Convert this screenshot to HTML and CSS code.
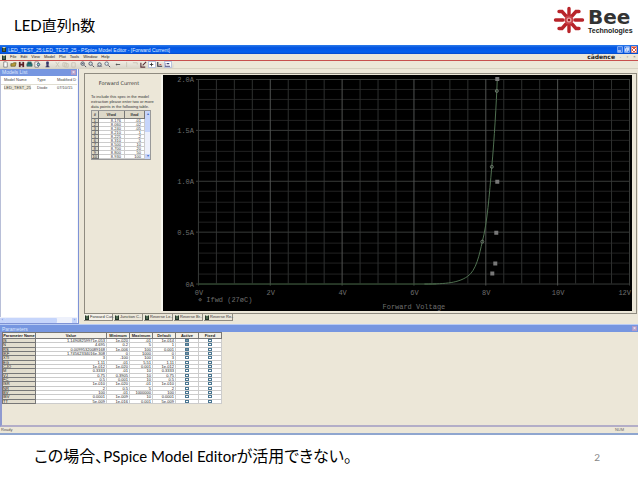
FILE: index.html
```html
<!DOCTYPE html>
<html lang="ja">
<head>
<meta charset="utf-8">
<title>LED直列n数</title>
<link rel="stylesheet" href="styles.css">
</head>
<body>
<header class="slide-head">
  <h1>LED直列n数</h1>
  <div class="logo">
    <svg class="logo-mark" viewBox="0 0 32 28" aria-hidden="true">
      <g stroke="#b8242a" stroke-width="3.4" stroke-linecap="round" fill="none">
        <path d="M16 2.500V9M16 19v6.500M2.500 14H10M22 14h7.500M6 5.500h3L13 10M26 5.500h-3L19 10M6 22.500h3L13 18M26 22.500h-3L19 18"/>
      </g>
      <circle cx="16" cy="14" r="4.500" fill="#c9434a"/>
      <circle cx="16" cy="14" r="2.500" fill="#e9a3a3"/>
      <circle cx="16" cy="14" r="1.200" fill="#a01a20"/>
    </svg>
    <div class="logo-words"><b>Bee</b><span>Technologies</span></div>
  </div>
</header>

<main class="window">
  <div class="titlebar">
    <i class="app-icon"></i>
    <span class="window-title">LED_TEST_25:LED_TEST_25 - PSpice Model Editor - [Forward Current]</span>
    <button class="win-btn" aria-label="Minimize"><svg viewBox="0 0 6 7"><path d="M1 5h3"/></svg></button>
    <button class="win-btn" aria-label="Restore"><svg viewBox="0 0 6 7"><path d="M1 3h3v2H1zM2 2h3v2"/></svg></button>
    <button class="win-btn close" aria-label="Close"><svg viewBox="0 0 6 7"><path d="M1 2l4 4M5 2L1 6"/></svg></button>
  </div>
  <nav class="menubar">
    <i class="doc-icon"></i>
    <button>File</button><button>Edit</button><button>View</button><button>Model</button><button>Plot</button><button>Tools</button><button>Window</button><button>Help</button>
    <span class="brand">cādence</span>
    <button class="mini" aria-label="Minimize document">-</button><button class="mini" aria-label="Restore document">▫</button><button class="mini" aria-label="Close document">×</button>
  </nav>
  <div class="toolbar">
    <div class="tools">
      <button aria-label="New"><svg viewBox="0 0 8 8"><path d="M2 1h3l1 1v5H2z" fill="#fff" stroke="#555" stroke-width=".7"/></svg></button>
      <button aria-label="Open"><svg viewBox="0 0 8 8"><path d="M1 6V3h2l1-1h3L6 6z" fill="#b59b38" stroke="#554b20" stroke-width=".7"/></svg></button>
      <button aria-label="Save"><svg viewBox="0 0 8 8"><path d="M1 1h6v6H1z" fill="#5a2024"/><path d="M3 1h2v2H3zM3 5h2v2H3z" fill="#ddd"/></svg></button>
      <button aria-label="Print"><svg viewBox="0 0 8 8"><path d="M2 1h4v2H2zM1 3h6v3H1z" fill="#287a7c" stroke="#24494b" stroke-width=".6"/></svg></button>
      <button aria-label="Preview"><svg viewBox="0 0 8 8"><path d="M1 1h4v6H1z" fill="#fff" stroke="#555" stroke-width=".7"/><circle cx="5" cy="4" r="1.500" fill="#9db" stroke="#347"/></svg></button>
      <span class="gap"></span>
      <button aria-label="Extract"><svg viewBox="0 0 8 8"><path d="M2 7l2-3 2 3M3 1h2v3H3z" fill="#335" stroke="#447"/></svg></button>
      <span class="gap"></span>
      <button aria-label="Cut" disabled><svg viewBox="0 0 8 8"><path d="M2 1l4 6M6 1L2 7" stroke="#c8c3b5" fill="none"/></svg></button>
      <button aria-label="Copy" disabled><svg viewBox="0 0 8 8"><path d="M1 2h4v4H1zM3 3h4v4H3z" stroke="#c8c3b5" fill="none"/></svg></button>
      <button aria-label="Paste" disabled><svg viewBox="0 0 8 8"><path d="M2 2h4v5H2z" stroke="#c8c3b5" fill="none"/></svg></button>
      <span class="gap"></span>
      <button aria-label="Zoom in"><svg viewBox="0 0 8 8"><circle cx="3" cy="3" r="2" fill="#cdd" stroke="#556"/><path d="M5 5l2 2M2 3h2" stroke="#445"/></svg></button>
      <button aria-label="Zoom out"><svg viewBox="0 0 8 8"><circle cx="3" cy="3" r="2" fill="#cdd" stroke="#556"/><path d="M5 5l2 2" stroke="#445"/></svg></button>
      <button aria-label="Zoom area"><svg viewBox="0 0 8 8"><circle cx="4" cy="4" r="2" fill="#cdd" stroke="#556"/><path d="M1 6h6" stroke="#778"/></svg></button>
      <button aria-label="Zoom fit"><svg viewBox="0 0 8 8"><circle cx="3" cy="3" r="2" fill="#dee" stroke="#667"/><path d="M5 5l2 2" stroke="#445"/></svg></button>
      <span class="gap"></span>
      <button aria-label="Trace"><svg viewBox="0 0 8 8"><path d="M2 4h5M3 3v2" stroke="#555" fill="none"/></svg></button>
      <span class="gap"></span>
      <button aria-label="Log X" disabled><svg viewBox="0 0 8 8"><path d="M3 1v6" stroke="#c8c3b5"/></svg></button>
      <button aria-label="Log Y" disabled><svg viewBox="0 0 8 8"><path d="M1 2h5v2" stroke="#c8c3b5" fill="none"/></svg></button>
      <button aria-label="Edit trace"><svg viewBox="0 0 8 8"><path d="M1 2v5h5M3 5l4-4" stroke="#5a3038" stroke-width="1.300" fill="none"/></svg></button>
      <button class="on" aria-label="Cursor"><svg viewBox="0 0 8 8"><path d="M4 2v4M2 4h4" stroke="#333" fill="none"/></svg></button>
      <button aria-label="Scale X"><svg viewBox="0 0 8 8"><path d="M2 1v5h5" stroke="#334" stroke-width="1.300" fill="none"/><path d="M4 4h2" stroke="#b44"/></svg></button>
      <button class="on" aria-label="Scale Y"><svg viewBox="0 0 8 8"><path d="M1 2v4h6M3 3h3" stroke="#447" stroke-width="1.200" fill="none"/></svg></button>
    </div>
  </div>

  <div class="workspace">
    <aside class="models">
      <h2>Models List<button aria-label="Close models list">×</button></h2>
      <div class="models-body">
        <table>
          <thead><tr><th>Model Name</th><th>Type</th><th>Modified D</th></tr></thead>
          <tbody><tr><td><mark>LED_TEST_25</mark></td><td>Diode</td><td>07/10/15</td></tr></tbody>
        </table>
      </div>
      <div class="hscroll"><button aria-label="Scroll left">‹</button><i></i><button aria-label="Scroll right">›</button></div>
    </aside>

    <section class="document">
      <div class="doc-frame">
        <div class="form">
          <h3>Forward Current</h3>
          <p>To include this spec in the model<br>extraction please enter two or more<br>data points in the following table.</p>
          <div class="points">
            <table>
              <thead><tr><th>#</th><th>Vfwd</th><th>Ifwd</th></tr></thead>
              <tbody>
                <tr><th>1</th><td>8.176</td><td>.01</td></tr>
                <tr><th>2</th><td>8.060</td><td>.02</td></tr>
                <tr><th>3</th><td>8.240</td><td>.05</td></tr>
                <tr><th>4</th><td>8.210</td><td>.1</td></tr>
                <tr><th>5</th><td>8.225</td><td>.2</td></tr>
                <tr><th>6</th><td>8.310</td><td>.5</td></tr>
                <tr><th>7</th><td>8.500</td><td>10</td></tr>
                <tr><th>8</th><td>8.700</td><td>20</td></tr>
                <tr><th>9</th><td>8.800</td><td>50</td></tr>
                <tr><th>10</th><td>8.930</td><td>100</td></tr>
              </tbody>
            </table>
            <div class="vscroll"><button aria-label="Scroll up">▴</button><i></i><button aria-label="Scroll down">▾</button></div>
          </div>
        </div>
        <svg class="plot" viewBox="0 0 470 237" role="img" aria-label="Forward Current against Forward Voltage">
          <g fill="none">
            <path class="minor" d="M35 14.500H468M35 24.500H468M35 34.500H468M35 45.500H468M35 65.500H468M35 76.500H468M35 86.500H468M35 96.500H468M35 116.500H468M35 127.500H468M35 137.500H468M35 147.500H468M35 168.500H468M35 178.500H468M35 188.500H468M35 199.500H468"/>
            <path class="minor-v" d="M53.500 4V209M71.500 4V209M89.500 4V209M125.500 4V209M143.500 4V209M161.500 4V209M197.500 4V209M215.500 4V209M233.500 4V209M269.500 4V209M287.500 4V209M305.500 4V209M341.500 4V209M359.500 4V209M377.500 4V209M413.500 4V209M431.500 4V209M449.500 4V209"/>
            <path class="major" d="M33 4.500H468M33 55.500H468M33 106.500H468M33 157.500H468M33 209.500H468M35.500 4V211M467.500 4V211"/>
            <path class="major-v" d="M107.500 4V211M179.500 4V211M251.500 4V211M323.500 4V211M395.500 4V211"/>
            <path class="base" d="M35 209.500H274"/>
            <path class="curve" d="M262 209.500C285 209.500 296 208 305 202S317 180 320 167C325 148 327 120 329.500 92S334 30 335 4"/>
            <g class="ring"><circle cx="320" cy="167" r="1.500"/><circle cx="329.500" cy="92" r="1.500"/><circle cx="334.500" cy="16" r="1.500"/></g>
          </g>
          <path class="dots" d="M333 2h4v4h-4zM333 105h4v4h-4zM332 156h4v4h-4zM331 187h4v4h-4zM328 197h4v4h-4z"/>
          <g class="ticks">
            <g text-anchor="end"><text x="31" y="7">2.0A</text><text x="31" y="58">1.5A</text><text x="31" y="109">1.0A</text><text x="31" y="160">0.5A</text><text x="31" y="212">0A</text><text x="469" y="220">12V</text></g>
            <g text-anchor="middle"><text x="36" y="220">0V</text><text x="108" y="220">2V</text><text x="180" y="220">4V</text><text x="252" y="220">6V</text><text x="324" y="220">8V</text><text x="396" y="220">10V</text></g>
            <text x="35" y="228">⋄ Ifwd (27øC)</text>
            <text x="220" y="235">Forward Voltage</text>
          </g>
        </svg>
      </div>
      <div class="tabs">
        <button class="active"><i class="doc-icon"></i>Forward Cur..</button><button><i class="doc-icon"></i>Junction C..</button><button><i class="doc-icon"></i>Reverse Le..</button><button><i class="doc-icon"></i>Reverse Br..</button><button><i class="doc-icon"></i>Reverse Re..</button>
      </div>
    </section>
  </div>

  <section class="parameters">
    <h2>Parameters<button aria-label="Close parameters">×</button></h2>
    <div class="param-body">
      <table>
        <colgroup><col class="c-name"><col class="c-value"><col class="c-num"><col class="c-num"><col class="c-num"><col class="c-num"><col class="c-num"></colgroup>
        <thead><tr><th>Parameter Name</th><th>Value</th><th>Minimum</th><th>Maximum</th><th>Default</th><th>Active</th><th>Fixed</th></tr></thead>
        <tbody>
          <tr><th>IS</th><td>1.14908259971e-053</td><td>1e-020</td><td>.01</td><td>1e-014</td><td><input type="checkbox" aria-label="IS active" checked></td><td><input type="checkbox" aria-label="IS fixed"></td></tr>
          <tr><th>N</th><td>4.695</td><td>0.2</td><td>5</td><td>1</td><td><input type="checkbox" aria-label="N active" checked></td><td><input type="checkbox" aria-label="N fixed"></td></tr>
          <tr><th>RS</th><td>0.00995320089168</td><td>1e-006</td><td>100</td><td>0.001</td><td><input type="checkbox" aria-label="RS active" checked></td><td><input type="checkbox" aria-label="RS fixed"></td></tr>
          <tr><th>IKF</th><td>1.74562334016e-308</td><td>0</td><td>1000</td><td>0</td><td><input type="checkbox" aria-label="IKF active" checked></td><td><input type="checkbox" aria-label="IKF fixed"></td></tr>
          <tr><th>XTI</th><td>3</td><td>-100</td><td>100</td><td>3</td><td><input type="checkbox" aria-label="XTI active"></td><td><input type="checkbox" aria-label="XTI fixed"></td></tr>
          <tr><th>EG</th><td>1.11</td><td>.01</td><td>5.51</td><td>1.11</td><td><input type="checkbox" aria-label="EG active"></td><td><input type="checkbox" aria-label="EG fixed"></td></tr>
          <tr><th>CJO</th><td>1e-012</td><td>1e-020</td><td>0.001</td><td>1e-012</td><td><input type="checkbox" aria-label="CJO active"></td><td><input type="checkbox" aria-label="CJO fixed"></td></tr>
          <tr><th>M</th><td>0.3333</td><td>.01</td><td>10</td><td>0.3333</td><td><input type="checkbox" aria-label="M active"></td><td><input type="checkbox" aria-label="M fixed"></td></tr>
          <tr><th>VJ</th><td>0.75</td><td>0.3905</td><td>10</td><td>0.75</td><td><input type="checkbox" aria-label="VJ active"></td><td><input type="checkbox" aria-label="VJ fixed"></td></tr>
          <tr><th>FC</th><td>0.5</td><td>0.001</td><td>10</td><td>0.5</td><td><input type="checkbox" aria-label="FC active"></td><td><input type="checkbox" aria-label="FC fixed"></td></tr>
          <tr><th>ISR</th><td>1e-010</td><td>1e-020</td><td>.01</td><td>1e-010</td><td><input type="checkbox" aria-label="ISR active"></td><td><input type="checkbox" aria-label="ISR fixed"></td></tr>
          <tr><th>NR</th><td>2</td><td>0.5</td><td>5</td><td>2</td><td><input type="checkbox" aria-label="NR active"></td><td><input type="checkbox" aria-label="NR fixed"></td></tr>
          <tr><th>BV</th><td>100</td><td>.01</td><td>1000000</td><td>100</td><td><input type="checkbox" aria-label="BV active"></td><td><input type="checkbox" aria-label="BV fixed"></td></tr>
          <tr><th>IBV</th><td>0.0001</td><td>1e-009</td><td>10</td><td>0.0001</td><td><input type="checkbox" aria-label="IBV active"></td><td><input type="checkbox" aria-label="IBV fixed"></td></tr>
          <tr><th>TT</th><td>5e-009</td><td>1e-016</td><td>0.001</td><td>5e-009</td><td><input type="checkbox" aria-label="TT active"></td><td><input type="checkbox" aria-label="TT fixed"></td></tr>
        </tbody>
      </table>
    </div>
  </section>
  <div class="status"><span>Ready</span><span class="num">NUM</span></div>
</main>

<footer class="slide-foot">
  <p>この場合、<span class="latin">PSpice Model Editor</span>が活用できない。</p>
  <span class="page-no">2</span>
</footer>
</body>
</html>
```
FILE: styles.css
```css
* { box-sizing: border-box; }
body { margin: 0; background: #fff; color: #000; font-family: "Liberation Sans", "Noto Sans CJK JP", sans-serif; }
h1, h2, h3, p { margin: 0; font-weight: normal; }
button { margin: 0; padding: 0; border: 0; background: none; color: inherit; font: inherit; display: block; }
table { border-collapse: collapse; border-spacing: 0; }
th, td { padding: 0; font-weight: normal; }
svg { display: block; }

.slide-head { display: flex; justify-content: space-between; height: 45px; padding: 6px 6px 0 14px; }
.slide-head h1, .slide-foot p { font: 15px/24px Lato, "Noto Sans CJK JP", sans-serif; font-feature-settings: "palt"; }
.slide-head h1 { margin-top: 7px; }
.logo { display: flex; gap: 3px; }
.logo-mark { flex: none; width: 32px; height: 28px; }
.logo-words { display: flex; flex-direction: column; width: 44px; color: #333; margin-top: 2px; }
.logo-words b { font: bold 20px/19px "DejaVu Sans", sans-serif; }
.logo-words span { font: bold 7px/8px "Liberation Sans", sans-serif; color: #222; }

.window { background: #ece7d8; font-size: 4px; line-height: 6px; }
.titlebar { display: flex; align-items: center; height: 9px; padding: 0 1px 0 2px; gap: 1px; background: linear-gradient(#2b7bea, #0455e2 30%, #0460ee 80%, #0648c8); color: #dfeaff; }
.app-icon, .doc-icon { flex: none; width: 4px; height: 5px; background: #4d6b50; border: 1px solid #26362c; border-top-color: #ccd6c4; }
.window-title { flex: 1; margin-left: 1px; font-size: 5px; line-height: 8px; white-space: nowrap; }
.win-btn { width: 6px; height: 7px; background: #3a78e8; border-radius: 1px; outline: 1px solid #7ea8f2; outline-offset: -1px; }
.win-btn svg { width: 6px; height: 7px; fill: none; stroke: #fff; stroke-width: 1; }
.win-btn.close { background: #d9553c; outline-color: #eb9d8c; }

.menubar { display: flex; align-items: center; height: 7px; padding: 0 2px; gap: 4px; border-bottom: 1px solid #c7504e; color: #222; }
.brand { margin-left: auto; font: bold 6px/6px "DejaVu Sans", sans-serif; }
.mini { color: #555; width: 3px; }
.toolbar { height: 8px; border-bottom: 1px solid #d8d2c2; }
.tools { display: flex; width: max-content; height: 7px; padding: 0 2px; background: linear-gradient(#f0ede3, #dad6ca); border-radius: 0 2px 2px 0; }
.tools button { width: 8px; height: 7px; }
.tools svg { width: 7px; height: 7px; }
.tools .gap { width: 2px; }
.tools .on { background: #fff; outline: 1px solid #b9c3dd; outline-offset: -1px; }

.workspace { display: flex; height: 255px; gap: 5px; }
.models { display: flex; flex-direction: column; width: 79px; border-right: 1px solid #7f93d6; border-bottom: 1px solid #7f93d6; padding-right: 1px; background: #f4f6fc; }
.models h2, .parameters h2 { display: flex; justify-content: space-between; height: 7px; padding: 0 1px 0 2px; font-size: 5px; line-height: 7px; color: #dbe7ff; background: #7696e0; }
.models h2 button, .parameters h2 button { width: 5px; height: 5px; margin-top: 1px; line-height: 5px; background: #b09ac8; color: #fff; }
.models-body { flex: 1; background: #fff; border-left: 1px solid #b8bfd8; }
.models table { width: 100%; table-layout: fixed; color: #444; white-space: nowrap; }
.models th { text-align: left; padding: 1px 0 0 3px; height: 8px; border-bottom: 1px solid #e0ddd0; }
.models td { padding-left: 3px; height: 6px; }
.models th:first-child { width: 33px; }
.models th:nth-child(2) { width: 21px; }
.models th:last-child, .models td:last-child { padding-left: 2px; }
.models mark { background: #ece7d8; color: #333; }
.hscroll { display: flex; align-items: center; height: 6px; background: #eef1fb; }
.hscroll button, .vscroll button { width: 5px; height: 5px; line-height: 4px; background: #c6d5fb; color: #4466b8; }
.hscroll i { flex: 1; height: 5px; margin-right: 15px; border-radius: 1px; background: #c6d5fb; }

.document { flex: 1; display: flex; flex-direction: column; min-width: 0; padding: 4px 1px 0 0; }
.doc-frame { display: grid; grid-template-columns: 78px 1fr; padding: 1px 4px 2px 0; border: solid #8f8b80; border-width: 1px 1px 0 1px; }
.form { padding: 3px 0 0 6px; border-right: 2px solid #f7f5ee; color: #333; }
.form h3 { padding-right: 14px; text-align: center; font: 5px/11px "DejaVu Sans", sans-serif; margin-bottom: 5px; white-space: nowrap; }
.form p { font-size: 4px; line-height: 5px; white-space: nowrap; }
.points { display: flex; width: 60px; margin-top: 1px; background: #fff; border: 1px solid #999; }
.points table { flex: 1; table-layout: fixed; font-size: 4px; line-height: 4px; }
.points thead th { height: 7px; font-weight: bold; }
.points th { background: #ddd8c9; border: solid #777; border-width: 0 1px 1px 0; line-height: 3px; }
.points th:first-child { width: 6px; }
.points td { height: 4px; line-height: 3px; padding-right: 3px; text-align: right; border: solid #ccc; border-width: 0 1px 1px 0; }
.vscroll { display: flex; flex-direction: column; width: 5px; background: #eef1fb; }
.vscroll i { height: 16px; background: #c6d5fb; }
.vscroll button:last-child { margin-top: auto; }

.plot { width: 100%; height: auto; background: #000; }
.minor { stroke: #222; }
.minor-v { stroke: #2e302f; }
.major { stroke: #383b39; }
.major-v { stroke: #505351; }
.base { stroke: #32502f; }
.curve { stroke: #4f6f50; }
.ring { stroke: #6b766b; stroke-width: 1; }
.dots { fill: #777; }
.ticks { fill: #6e6e6e; font: 7px "Liberation Mono", monospace; }

.tabs { display: flex; gap: 1px; height: 9px; border-top: 1px solid #8f8b80; }
.tabs button { display: flex; align-items: center; gap: 1px; width: 29px; height: 7px; padding-left: 1px; white-space: nowrap; font-size: 4px; border: solid #8f8b80; border-width: 0 1px 1px 0; color: #333; }
.tabs .active { background: #f4f1e8; }

.parameters { border-left: 2px solid #8f9ad0; border-bottom: 2px solid #b3aec8; }
.parameters h2 { margin-left: -2px; height: 8px; line-height: 8px; border-top: 1px solid #b8cbf4; }
.param-body { height: 93px; }
.parameters table { height: 72px; width: 220px; table-layout: fixed; background: #fff; font-size: 4px; line-height: 3px; color: #222; }
.c-name { width: 33px; }
.c-value { width: 71px; }
.c-num { width: 23px; }
.parameters th, .parameters td { border: 1px solid #ccc; white-space: nowrap; }
.parameters thead th { height: 6px; font-weight: bold; background: #f2efe6; border-color: #777; }
.parameters tbody th { text-align: left; background: #e2ddce; border-color: #777; }
.parameters td { text-align: right; padding-right: 1px; }
.parameters td:nth-child(n+6) { text-align: center; padding: 0; }
.parameters input { appearance: none; display: block; width: 4px; height: 3px; margin: 0 auto; border: 1px solid #4a7792; background: #fff; }
.parameters input:checked { background: #7d97a5; }

.status { display: flex; justify-content: space-between; height: 8px; padding: 0 14px 0 1px; border-bottom: 2px solid #8fa6cf; color: #555; }
.status .num { color: #666; }

.slide-foot { display: flex; justify-content: space-between; align-items: center; height: 42px; padding: 0 38px 0 34px; }
.slide-foot p { font-size: 16px; }
.slide-foot .latin { font-size: 15px; }
.page-no { font: 10px/12px Lato, sans-serif; color: #888; margin-top: 2px; }
```
